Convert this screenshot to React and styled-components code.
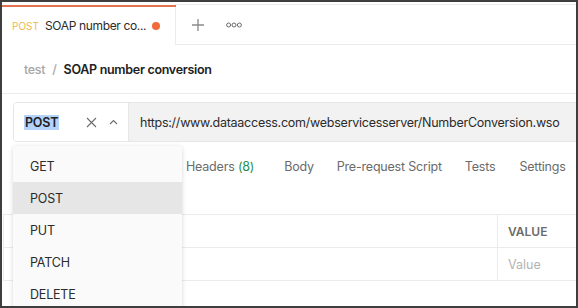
import React from 'react'
import styled, { createGlobalStyle } from 'styled-components'

const GlobalStyle = createGlobalStyle`
  html, body { margin: 0; padding: 0; background: #ffffff; }
  * { box-sizing: border-box; }
`

const Frame = styled.div`
  position: relative;
  width: 578px;
  height: 308px;
  border: 2px solid #3e3e3e;
  background: #ffffff;
  overflow: hidden;
  font-family: Inter, 'Noto Sans', sans-serif;
  color: #212121;
  white-space: nowrap;
`

const TabBar = styled.div`
  display: flex;
  align-items: stretch;
  height: 41px;
  margin-top: 2px;
  border-top: 1px solid #ebebeb;
  border-bottom: 1px solid #ebebeb;
`

const Tab = styled.div`
  position: relative;
  display: flex;
  align-items: center;
  width: 174px;
  margin-top: -1px;
  margin-bottom: -1px;
  padding: 2px 0 0 10px;
  background: #ffffff;
  border-right: 1px solid #ebebeb;

  &::before {
    content: '';
    position: absolute;
    left: 0;
    right: -1px;
    top: 1px;
    height: 2px;
    background: #e2714f;
  }
`

const Method = styled.span`
  width: 33px;
  font-size: 10px;
  color: #f2b84b;
`

const TabTitle = styled.span`
  font-size: 12px;
  letter-spacing: -0.35px;
  color: #2b2b2b;
`

const Dot = styled.span`
  width: 8px;
  height: 8px;
  border-radius: 50%;
  background: #f26b3a;
  margin-left: 6px;
`

const TabAction = styled.div`
  display: flex;
  align-items: center;
  justify-content: center;
  width: ${p => p.$w}px;
  color: #8a8a8a;
`

const Breadcrumb = styled.div`
  display: flex;
  align-items: center;
  gap: 7px;
  height: 49px;
  padding: 0 0 0 22px;
  font-size: 12.5px;
  letter-spacing: -0.3px;
  border-bottom: 1px solid #ebebeb;
`

const Crumb = styled.span`
  color: ${p => (p.$current ? '#212121' : '#a6a6a6')};
  font-weight: ${p => (p.$current ? 600 : 500)};
`

const UrlRow = styled.div`
  display: flex;
  margin: 8px -40px 0 11px;
  height: 40px;
  border: 1px solid #e6e6e6;
  border-radius: 4px;
  overflow: hidden;
`

const MethodSelect = styled.div`
  display: flex;
  align-items: center;
  width: 115px;
  padding: 0 0 0 10px;
  background: #ffffff;
  border-right: 1px solid #e6e6e6;
`

const Selected = styled.span`
  font-size: 12.5px;
  letter-spacing: -0.2px;
  font-weight: 600;
  color: #212121;
  background: #b3d3fb;
  padding: 0 1px;
  margin-right: 27px;
`

const UrlInput = styled.div`
  display: flex;
  align-items: center;
  flex: 1;
  padding-left: 11px;
  background: #f2f2f2;
  font-size: 12.5px;
  letter-spacing: -0.25px;
  color: #2b2b2b;
`

const SubTabs = styled.div`
  display: flex;
  align-items: center;
  height: 46px;
  padding-left: 184px;
  margin-top: 1px;
  font-size: 12.5px;
  letter-spacing: -0.2px;
  color: #6b6b6b;
`

const SubTab = styled.span`
  margin-right: ${p => p.$gap}px;
`

const Count = styled.span`
  color: #1f8f4e;
`

const Table = styled.div`
  margin: 25px 0 0 1px;
  border-top: 1px solid #ebebeb;
  border-left: 1px solid #ebebeb;
`

const Row = styled.div`
  display: grid;
  grid-template-columns: 493px 1fr;
  height: 33px;
  border-bottom: 1px solid #ebebeb;
`

const Cell = styled.div`
  display: flex;
  align-items: center;
  padding-left: 10px;
  font-size: ${p => (p.$head ? 12 : 12.5)}px;
  font-weight: ${p => (p.$head ? 600 : 400)};
  color: ${p => (p.$head ? '#6b6b6b' : '#b3b3b3')};
  & + & { border-left: 1px solid #ebebeb; }
`

const Menu = styled.div`
  position: absolute;
  left: 11px;
  top: 144px;
  width: 169px;
  padding-top: 4px;
  background: #fafafa;
  border-radius: 4px;
  box-shadow: 0 1px 5px rgba(0, 0, 0, 0.16);
`

const MenuItem = styled.div`
  display: flex;
  align-items: center;
  height: 32px;
  padding-left: 17px;
  font-size: 12.5px;
  letter-spacing: -0.2px;
  color: #2b2b2b;
  background: ${p => (p.$active ? '#e6e6e6' : 'transparent')};
`

const methods = ['GET', 'POST', 'PUT', 'PATCH', 'DELETE']

export default function App() {
  return (
    <Frame>
      <GlobalStyle />
      <TabBar>
        <Tab>
          <Method>POST</Method>
          <TabTitle>SOAP number co...</TabTitle>
          <Dot />
        </Tab>
        <TabAction $w={44}>
          <svg width="14" height="14" viewBox="0 0 14 14" fill="none" stroke="#8a8a8a" strokeWidth="1.3">
            <path d="M7 1v12M1 7h12" />
          </svg>
        </TabAction>
        <TabAction $w={28}>
          <svg width="16" height="6" viewBox="0 0 16 6" fill="none" stroke="#6b6b6b" strokeWidth="1">
            <circle cx="2.6" cy="3" r="2" />
            <circle cx="8" cy="3" r="2" />
            <circle cx="13.4" cy="3" r="2" />
          </svg>
        </TabAction>
      </TabBar>

      <Breadcrumb>
        <Crumb>test</Crumb>
        <Crumb>/</Crumb>
        <Crumb $current>SOAP number conversion</Crumb>
      </Breadcrumb>

      <UrlRow>
        <MethodSelect>
          <Selected>POST</Selected>
          <svg width="11" height="11" viewBox="0 0 11 11" fill="none" stroke="#6b6b6b" strokeWidth="1.1">
            <path d="M1 1l9 9M10 1l-9 9" />
          </svg>
          <svg style={{ marginLeft: 12 }} width="9" height="6" viewBox="0 0 9 6" fill="none" stroke="#6b6b6b" strokeWidth="1.1">
            <path d="M1 5l3.5-3.5L8 5" />
          </svg>
        </MethodSelect>
        <UrlInput>https://www.dataaccess.com/webservicesserver/NumberConversion.wso</UrlInput>
      </UrlRow>

      <SubTabs>
        <SubTab $gap={30}>Headers <Count>(8)</Count></SubTab>
        <SubTab $gap={23}>Body</SubTab>
        <SubTab $gap={23}>Pre-request Script</SubTab>
        <SubTab $gap={24}>Tests</SubTab>
        <SubTab $gap={0}>Settings</SubTab>
      </SubTabs>

      <Table>
        <Row>
          <Cell $head />
          <Cell $head>VALUE</Cell>
        </Row>
        <Row>
          <Cell />
          <Cell>Value</Cell>
        </Row>
      </Table>

      <Menu>
        {methods.map(m => (
          <MenuItem key={m} $active={m === 'POST'}>{m}</MenuItem>
        ))}
      </Menu>
    </Frame>
  )
}
